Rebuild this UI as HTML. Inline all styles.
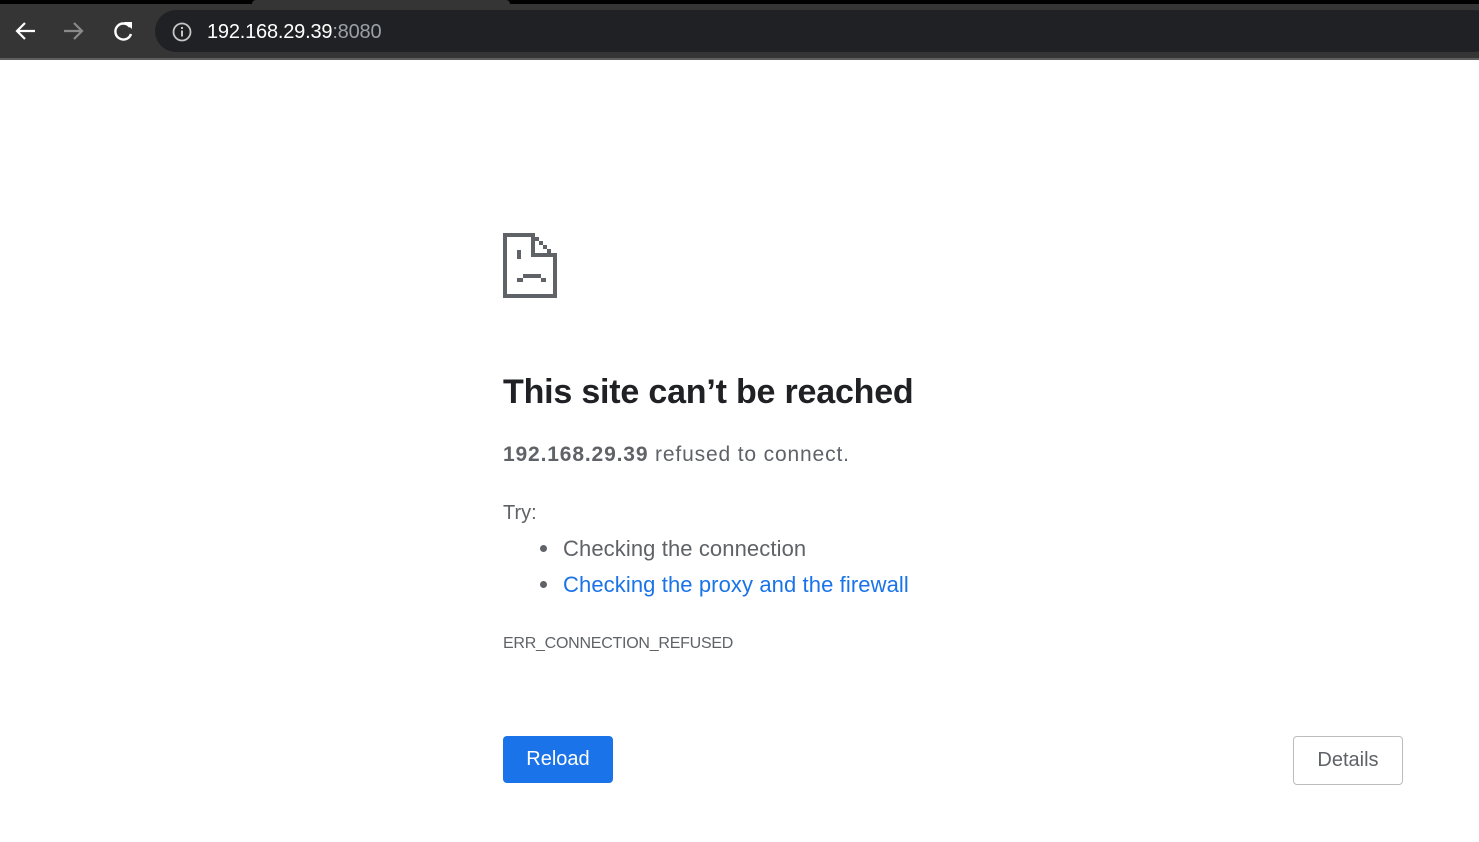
<!DOCTYPE html>
<html><head><style>
body{margin:0;width:1479px;height:842px;background:#fff;font-family:"Liberation Sans",sans-serif;position:relative;overflow:hidden}
.top{position:absolute;left:0;top:0;width:1479px;height:4px;background:#000}
.tab{position:absolute;left:252px;top:0;width:258px;height:4px;background:#353535;border-radius:6px 6px 0 0}
.bar{position:absolute;left:0;top:4px;width:1479px;height:54px;background:#353535}
.line{position:absolute;left:0;top:58px;width:1479px;height:2px;background:#5f5f5f}
.omni{position:absolute;left:155px;top:10px;width:1340px;height:42px;background:#202124;border-radius:21px}
.url{position:absolute;left:207px;top:21px;font-size:20px;color:#fff;letter-spacing:-0.2px}
.url span{color:#9aa0a6}
.t{position:absolute;color:#5f6368;white-space:nowrap}
.dot{position:absolute;width:7px;height:7px;border-radius:50%;background:#5f6368}
</style></head><body>
<div class="top"></div><div class="tab"></div><div class="bar"></div><div class="line"></div>
<svg style="position:absolute;left:0;top:0" width="150" height="60">
<g fill="none" stroke="#fff" stroke-width="2.2"><path d="M35 31H17M25 23l-8 8 8 8"/></g>
<g fill="none" stroke="#8a8a8a" stroke-width="2.2"><path d="M64 31h18M74 23l8 8-8 8"/></g>
<g fill="none" stroke="#fff" stroke-width="2.4"><path d="M130 27a8 8 0 1 0 1 7"/><path d="M124 22l8 0 0 7z" fill="#fff" stroke="none"/></g>
</svg>
<div class="omni"></div>
<svg style="position:absolute;left:171px;top:21px" width="22" height="22"><circle cx="11" cy="11" r="8.5" fill="none" stroke="#c4c7c5" stroke-width="1.8"/><rect x="10" y="9.5" width="2" height="6" fill="#c4c7c5"/><rect x="10" y="6" width="2" height="2" fill="#c4c7c5"/></svg>
<div class="url">192.168.29.39<span>:8080</span></div>
<svg style="position:absolute;left:503px;top:233px" width="56" height="66" fill="#5f6368">
<rect x="0" y="0" width="32" height="4"/><rect x="0" y="0" width="4" height="65"/><rect x="0" y="61" width="54" height="4"/><rect x="50" y="24" width="4" height="41"/>
<rect x="28" y="0" width="4" height="24"/><rect x="28" y="20" width="26" height="4"/>
<rect x="32" y="4" width="4" height="4"/><rect x="36" y="8" width="4" height="4"/><rect x="40" y="12" width="4" height="4"/><rect x="44" y="16" width="4" height="4"/>
<rect x="14" y="17" width="4" height="9"/><rect x="20" y="41" width="18" height="4"/><rect x="14" y="45" width="6" height="4"/><rect x="38" y="45" width="5" height="4"/>
</svg>
<div class="t" style="left:503px;top:373px;font-size:34px;font-weight:bold;color:#202124;letter-spacing:-0.2px">This site can’t be reached</div>
<div class="t" style="left:503px;top:443px;font-size:21px;letter-spacing:0.85px"><b>192.168.29.39</b> refused to connect.</div>
<div class="t" style="left:503px;top:502px;font-size:20px">Try:</div>
<div class="dot" style="left:540px;top:545px"></div>
<div class="dot" style="left:540px;top:581px"></div>
<div class="t" style="left:563px;top:536px;font-size:22px;letter-spacing:0.1px">Checking the connection</div>
<div class="t" style="left:563px;top:572px;font-size:22px;letter-spacing:0.1px;color:#1a73e8">Checking the proxy and the firewall</div>
<div class="t" style="left:503px;top:635px;font-size:16px;letter-spacing:-0.25px">ERR_CONNECTION_REFUSED</div>
<div style="position:absolute;left:503px;top:736px;width:110px;height:47px;background:#1a73e8;border-radius:4px;color:#fff;font-size:20px;line-height:47px;text-align:center">Reload</div>
<div style="position:absolute;left:1293px;top:736px;width:108px;height:47px;border:1px solid #babcbe;border-radius:4px;color:#5f6368;font-size:20px;line-height:47px;text-align:center">Details</div>
</body></html>
